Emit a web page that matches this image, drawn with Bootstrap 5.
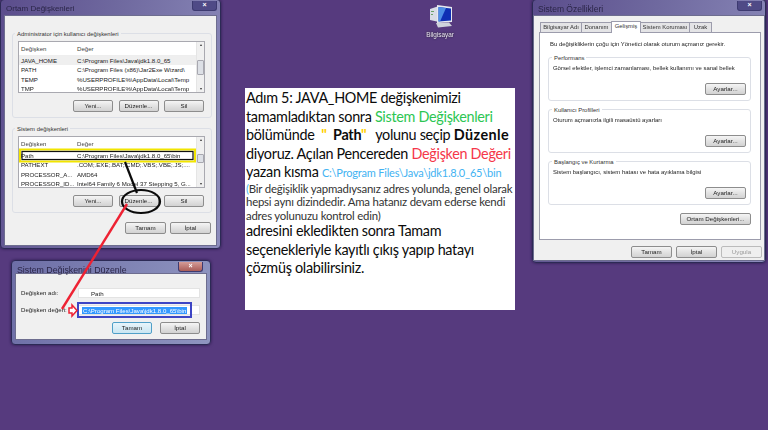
<!DOCTYPE html>
<html lang="tr">
<head>
<meta charset="utf-8">
<title>Ortam Değişkenleri</title>
<link href="https://cdn.jsdelivr.net/npm/bootstrap@5.3.0/dist/css/bootstrap.min.css" rel="stylesheet">
<style>
html,body{height:100%;margin:0}
body{background:#563a7e;overflow:hidden;font-family:"Liberation Sans",sans-serif}
.desk{position:relative;width:768px;height:430px;overflow:hidden;filter:blur(.3px)}
.win{position:absolute;border:1px solid #2c2a55;border-radius:4px;box-shadow:0 0 3px rgba(20,10,50,.7);background:linear-gradient(100deg,#5b4d8c 0%,#6f699f 45%,#8d8cbc 100%);color:#222;font-size:6.1px;line-height:8px}
.w-env{left:0;top:-1px;width:221px;height:250px}
.w-edit{left:11px;top:260px;width:200px;height:85px;background:linear-gradient(100deg,#6d6ea6,#8f95c0)}
.w-sys{left:532px;top:-1px;width:234px;height:264px}
.ttl{height:15px;padding:5px 0 0 5px;color:#2a2547;font-size:8px}
.w-edit .ttl{font-size:8.8px}
.w-sys .ttl{font-size:8.5px}
.x-btn{position:absolute;right:3px;top:1px;width:25px;height:10px;border:1px solid #3d3a70;border-top:0;border-radius:0 0 3px 3px;background:#4f4a86;color:#fff;font-size:7px;font-weight:700;line-height:8px;text-align:center}
.w-edit .x-btn{background:linear-gradient(#d59c97,#a95c58);right:7px}
.pane{background:#f0f0f0;border:1px solid #6d6d8f;margin:0 3px}
.w-env .pane{height:231px;padding:17px 4px 0 7px}
.w-edit .pane{height:67px;padding:14px 6px 0 5px;margin-top:-3px}
.w-sys .pane{height:246px;padding:5px 3px 0 5px;margin:0}
.grp{border:1px solid #dcdfe6;border-radius:3px;margin:0;padding:0;min-width:0}
.grp legend{float:none;width:auto;font-size:5.9px;line-height:8px;padding:0 2px;color:#333}
.grp-env{height:85px;padding:3px 6px 0 5px;margin-bottom:10px;position:relative}
.grp-env legend{margin:-4px 0 0 2px;position:absolute;top:0;left:0;background:#f0f0f0}
.lst{background:#fff;border:1px solid #a9a9b0;height:52px;margin-top:4px;display:flex}
.lst-body{flex:1 1 auto;min-width:0}
.lst-row{display:grid;grid-template-columns:56px 1fr;height:9.4px;padding-left:2px;line-height:9.4px;white-space:nowrap;overflow:hidden}
.lst-head{height:14px;line-height:13px;color:#444;border-bottom:1px solid #eee}
.lst-sel{background:#efefef}
.sbar{flex:0 0 8px;background:#f0f0f0;border-left:1px solid #e5e5e5;display:flex;flex-direction:column;align-items:center;justify-content:space-between;color:#333;font-size:4px;line-height:6px}
.thumb{display:block;width:7px;height:15px;background:#dde0e6;border:1px solid #a8a8b0;border-radius:1px}
.thumb-s{height:9px;margin-top:-8px}
.wbtn{display:inline-block;width:40px;height:12px;padding:0;font-size:6.2px;line-height:10px;color:#222;border:1px solid #8d8d8d;border-radius:2px;background:linear-gradient(#f5f5f5,#e2e2e2 50%,#d2d2d2);text-align:center}
.wbtn-focus{border-color:#4f9fc8;background:linear-gradient(#e8f5fb,#c9e6f2)}
.wbtn-off{color:#999;border-color:#bbb;background:#efefef}
.wbtn-wide{width:71px}
.btn-row-env{margin-top:7px;padding-left:55px;padding-right:1px}
.btn-row-foot{margin-top:-1px;padding-right:1px}
.btn-row-foot .wbtn{width:41px}
.fld{height:10px;background:#fff;border:1px solid #e3e3e3;width:122px;line-height:9px;padding-left:12px;margin-bottom:7px}
.fld-sel{padding-left:3px}
.fld-lbl{width:57px;line-height:10px}
.sel-txt{background:#3399ff;color:#fff;padding:0 1px}
.blue-box{position:absolute;left:65px;top:41px;width:115px;height:16px;border:2px solid #3d45c4}
.tabbar{height:11px;padding-left:1px;display:flex;align-items:flex-end}
.tabx{height:10px;padding:0 0;line-height:9px;font-size:5.9px;background:#e4e4e6;color:#333;border:1px solid #9c9cac;border-bottom:0;margin-right:-1px;border-radius:1px 1px 0 0;text-align:center}
.tabx-a{width:42px}.tabx-b{width:31px}.tabx-c{width:30px}.tabx-d{width:50px}.tabx-e{width:23px}
.tabx-on{height:12px;background:#fff;margin-bottom:-1px;position:relative;z-index:1}
.tab-body{background:#fff;border:1px solid #9c9cac;height:208px;padding:7px 9px 0 8px}
.grp-sys{height:44px;padding:6px 4px 0 4px;margin-bottom:8px;position:relative}
.grp-sys legend{position:absolute;top:0;left:0;margin:-4px 0 0 3px;background:#fff}
.grp-sys .wbtn{width:41px}
.ayar-row{margin-top:11px}
.w-sys p{margin:0 0 9px;padding-left:2px}
.tx{font-size:5.95px}
.foot-sys{margin:6px -1px 0 0}
.foot-sys .wbtn{width:41px}
.panel{position:absolute;left:245px;top:88px;width:270px;height:222px;background:#fff;color:#0b0b0b;font-family:Lato,sans-serif;font-size:14.4px;letter-spacing:-.3px;line-height:18.5px;padding:1px 0 0 1px;white-space:nowrap}
.panel p{margin:0}
.sm{display:block;font-size:11.4px;letter-spacing:-.21px;line-height:13.5px;color:#333;margin:-1px 0 0}
.c-g{color:#2dc653}.c-y{color:#ffd000;font-weight:700}.c-r{color:#f5374a}.c-b{color:#43b3f2;font-size:11px;letter-spacing:-.2px}
.q-pad{margin-left:3px}.q-pad2{margin-left:2px}.bd-w{letter-spacing:.4px}
.ico{position:absolute;left:426px;top:3px;width:28px;text-align:center}
.ico-lbl{position:absolute;left:420px;top:31px;width:40px;text-align:center;color:#e8e4f0;font-size:6.4px;line-height:8px;text-shadow:0 0 2px #222}
.over{position:absolute;left:0;top:0;pointer-events:none}
</style>
</head>
<body>
<div class="desk">

<section class="win w-env">
  <div class="ttl">Ortam Değişkenleri</div><span class="x-btn">×</span>
  <div class="pane">
    <fieldset class="grp grp-env">
      <legend>Administrator için kullanıcı değişkenleri</legend>
      <div class="lst">
        <div class="lst-body">
          <div class="lst-row lst-head"><span>Değişken</span><span>Değer</span></div>
          <div class="lst-row lst-sel"><span>JAVA_HOME</span><span>C:\Program Files\Java\jdk1.8.0_65</span></div>
          <div class="lst-row"><span>PATH</span><span>C:\Program Files (x86)\Jar2Exe Wizard\</span></div>
          <div class="lst-row"><span>TEMP</span><span>%USERPROFILE%\AppData\Local\Temp</span></div>
          <div class="lst-row"><span>TMP</span><span>%USERPROFILE%\AppData\Local\Temp</span></div>
        </div>
        <div class="sbar"><span>▴</span><i class="thumb"></i><span>▾</span></div>
      </div>
      <div class="d-flex justify-content-between btn-row-env"><button class="wbtn">Yeni...</button><button class="wbtn">Düzenle...</button><button class="wbtn">Sil</button></div>
    </fieldset>
    <fieldset class="grp grp-env">
      <legend>Sistem değişkenleri</legend>
      <div class="lst">
        <div class="lst-body">
          <div class="lst-row lst-head"><span>Değişken</span><span>Değer</span></div>
          <div class="lst-row"><span>Path</span><span>C:\Program Files\Java\jdk1.8.0_65\bin</span></div>
          <div class="lst-row"><span>PATHEXT</span><span>.COM;.EXE;.BAT;.CMD;.VBS;.VBE;.JS;....</span></div>
          <div class="lst-row"><span>PROCESSOR_A...</span><span>AMD64</span></div>
          <div class="lst-row"><span>PROCESSOR_ID...</span><span>Intel64 Family 6 Model 37 Stepping 5, G...</span></div>
        </div>
        <div class="sbar"><span>▴</span><i class="thumb thumb-s"></i><span>▾</span></div>
      </div>
      <div class="d-flex justify-content-between btn-row-env"><button class="wbtn">Yeni...</button><button class="wbtn">Düzenle...</button><button class="wbtn">Sil</button></div>
    </fieldset>
    <div class="d-flex justify-content-end gap-1 btn-row-foot"><button class="wbtn">Tamam</button><button class="wbtn">İptal</button></div>
  </div>
</section>

<section class="win w-edit">
  <div class="ttl">Sistem Değişkenini Düzenle</div><span class="x-btn">×</span>
  <div class="pane">
    <div class="d-flex"><span class="fld-lbl">Değişken adı:</span><span class="fld">Path</span></div>
    <div class="d-flex"><span class="fld-lbl">Değişken değeri:</span><span class="fld fld-sel"><span class="sel-txt">C:\Program Files\Java\jdk1.8.0_65\bin</span></span></div>
    <div class="d-flex justify-content-end gap-2"><button class="wbtn wbtn-focus">Tamam</button><button class="wbtn">İptal</button></div>
  </div>
  <i class="blue-box"></i>
</section>

<section class="win w-sys">
  <div class="ttl">Sistem Özellikleri</div><span class="x-btn">×</span>
  <div class="pane">
    <div class="tabbar">
      <span class="tabx tabx-a">Bilgisayar Adı</span><span class="tabx tabx-b">Donanım</span><span class="tabx tabx-c tabx-on">Gelişmiş</span><span class="tabx tabx-d">Sistem Koruması</span><span class="tabx tabx-e">Uzak</span>
    </div>
    <div class="tab-body">
      <p class="tx">Bu değişikliklerin çoğu için Yönetici olarak oturum açmanız gerekir.</p>
      <fieldset class="grp grp-sys"><legend>Performans</legend>
        <div class="tx">Görsel efektler, işlemci zamanlaması, bellek kullanımı ve sanal bellek</div>
        <div class="d-flex justify-content-end ayar-row"><button class="wbtn">Ayarlar...</button></div>
      </fieldset>
      <fieldset class="grp grp-sys"><legend>Kullanıcı Profilleri</legend>
        <div class="tx">Oturum açmanızla ilgili masaüstü ayarları</div>
        <div class="d-flex justify-content-end ayar-row"><button class="wbtn">Ayarlar...</button></div>
      </fieldset>
      <fieldset class="grp grp-sys"><legend>Başlangıç ve Kurtarma</legend>
        <div class="tx">Sistem başlangıcı, sistem hatası ve hata ayıklama bilgisi</div>
        <div class="d-flex justify-content-end ayar-row"><button class="wbtn">Ayarlar...</button></div>
      </fieldset>
      <div class="d-flex justify-content-end"><button class="wbtn wbtn-wide">Ortam Değişkenleri...</button></div>
    </div>
    <div class="d-flex justify-content-end gap-1 foot-sys"><button class="wbtn">Tamam</button><button class="wbtn">İptal</button><button class="wbtn wbtn-off">Uygula</button></div>
  </div>
</section>

<article class="panel">
  <p>Adım 5: JAVA_HOME değişkenimizi<br>
  tamamladıktan sonra <span class="c-g">Sistem Değişkenleri</span><br>
  bölümünde &nbsp;<span class="c-y">"</span> <b class="q-pad">Path</b><span class="c-y">"</span> &nbsp;<span class="q-pad2">yolunu seçip</span> <b class="bd-w">Düzenle</b><br>
  diyoruz. Açılan Pencereden <span class="c-r">Değişken Değeri</span><br>
  yazan kısma <span class="c-b">C:\Program Files\Java\jdk1.8.0_65\bin</span>
  <span class="sm"><span class="c-b">(</span>Bir değişiklik yapmadıysanız adres yolunda, genel olarak<br>hepsi aynı dizindedir. Ama hatanız devam ederse kendi<br>adres yolunuzu kontrol edin)</span>
  adresini ekledikten sonra Tamam<br>
  seçenekleriyle kayıtlı çıkış yapıp hatayı<br>
  çözmüş olabilirsiniz.</p>
</article>

<svg class="ico" viewBox="0 0 28 26" height="26" aria-label="Bilgisayar">
  <path d="M4 6 13 3v16l-9-2z" fill="#d8dce6"/>
  <path d="M5 8h3v1H5zM5 11h2v1H5z" fill="#6aa06a"/>
  <path d="M11 2 26 4v15l-15 1z" fill="#e6e9f0"/>
  <path d="M12.500 4 25 5.500v12L12.500 18.500z" fill="#0f2fb4"/>
  <path d="M12.500 4 20 4.900 14 18.400h-1.500z" fill="#4f8fe6"/>
  <path d="M10 20 23 19.500 26 23 12 24.500z" fill="#cfd3dc"/>
</svg>
<div class="ico-lbl">Bilgisayar</div>

<svg class="over" width="768" height="430" viewBox="0 0 768 430">
  <rect x="20" y="149.500" width="175" height="12" fill="none" stroke="#f2e500" stroke-width="2"/>
  <rect x="22" y="151.500" width="171" height="8" fill="none" stroke="#111" stroke-width="1.200"/>
  <path d="M125 162 137 193" stroke="#0a0a0a" stroke-width="2.200"/>
  <ellipse cx="141" cy="201.500" rx="19" ry="11.500" fill="none" stroke="#0a0a0a" stroke-width="2.200"/>
  <path d="M127 204 62 309" stroke="#ee2233" stroke-width="2.400"/>
  <path d="M69 308h3v-3l5 5.500-5 5.500v-3h-3z" fill="#fff" stroke="#ee2233" stroke-width="1.500"/>
</svg>

</div>
</body>
</html>
